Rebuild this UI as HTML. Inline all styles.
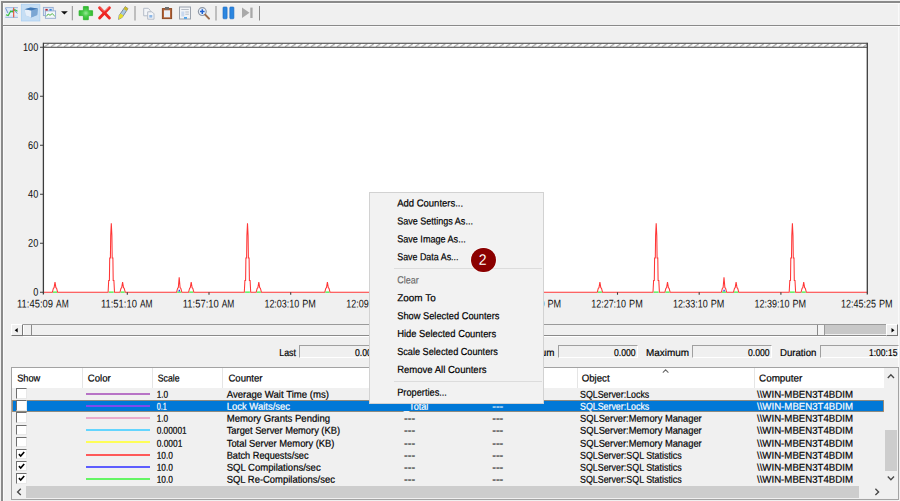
<!DOCTYPE html>
<html lang="en"><head><meta charset="utf-8"><title>Performance Monitor</title>
<style>
html,body{margin:0;padding:0}
body{width:900px;height:501px;overflow:hidden;position:relative;background:#f0f0f0;font-family:"Liberation Sans",sans-serif;color:#000;-webkit-text-stroke:0.2px}
.abs,.abs>*{position:absolute}
#frame div{position:absolute}
#toolbar{position:absolute;left:3px;top:4px;width:895px;height:21px}
#toolbar svg{position:absolute}
#chart{position:absolute;left:0;top:27px;width:900px;height:290px}
#slider{position:absolute;left:11px;top:324px;width:888px;height:12px}
#slider div,#slider svg{position:absolute}
#stats{position:absolute;left:0;top:340px;width:900px;height:24px}
.box{position:absolute;top:345px;height:12px;border-top:1px solid #a0a0a0;border-left:1px solid #a0a0a0;border-bottom:1px solid #fff;border-right:1px solid #fff;box-sizing:border-box;height:13px}
#list{position:absolute;left:11px;top:367px;width:888px;height:133px;box-sizing:border-box;border:1px solid #a3a3a3;background:#f0f0f0}
#hdr{position:absolute;left:0;top:0;width:872px;height:20px;background:#fff}
#hdr i{position:absolute;top:0;width:1px;height:20px;background:#e5e5e5}
.row{position:absolute;left:0;width:872px;height:12.15px}
.sel{background:#0078d7;box-shadow:inset 0 0 0 0.8px rgba(235,150,70,.8)}
.cb{position:absolute;left:3.8px;width:11px;height:10.5px;box-sizing:border-box;background:#fff;border-top:1px solid #6e6e6e;border-left:1px solid #6e6e6e;border-right:1px solid #e8e8e8;border-bottom:1px solid #e8e8e8}
.cl{position:absolute;left:73.7px;width:64.3px;height:2px;opacity:.92}
#menu{position:absolute;left:369px;top:192px;width:175px;height:212px;box-sizing:border-box;background:#f2f2f2;border:1px solid #d2d2d2}
#menu hr{position:absolute;margin:0;border:0;height:1px;background:#dcdcdc;left:24px;width:148px}
#badge{position:absolute;left:471.2px;top:247.7px;width:24.4px;height:24.4px;border-radius:50%;background:#8b0000;-webkit-text-stroke:0;box-shadow:0 0 0 .8px rgba(255,255,255,.7)}
</style></head><body>

<div id="frame">
<div style="left:1px;top:1px;width:899px;height:2px;background:#8a8a8a"></div>
<div style="left:1px;top:1px;width:2px;height:500px;background:#8a8a8a"></div>
<div style="left:3px;top:3px;width:897px;height:1px;background:#fafafa"></div>
<div style="left:3px;top:3px;width:1px;height:498px;background:#fafafa"></div>
<div style="left:898px;top:3px;width:1px;height:498px;background:#fafafa"></div>
<div style="left:3px;top:25px;width:897px;height:1px;background:#8a8a8a"></div>
<div style="left:4px;top:26px;width:896px;height:1px;background:#fafafa"></div>
</div>
<svg id="tb" style="position:absolute;left:0;top:0" width="280" height="26" viewBox="0 0 280 26">
<g><rect x="5.3" y="7.2" width="12.6" height="10.4" fill="#dce9f7"/><path d="M5.3 7.6 H17.9 M5.3 17.4 H17.9" stroke="#8fb0dc" stroke-width=".8"/><path d="M5.6 8.2 L8.2 13.5 M11 12.5 L13 9.5 M14.5 10 L17.5 14" fill="none" stroke="#6f93cf" stroke-width="1"/><path d="M5.6 14 H17.6" stroke="#f4f8fc" stroke-width="1"/><path d="M6 14.8 L8.2 15.6 L10.8 11 L12.4 11.8 L14.8 9.6 L17.4 11.2" fill="none" stroke="#35bd35" stroke-width="1.15"/><rect x="13.1" y="7.6" width="1.15" height="9.8" fill="#e4553a"/></g>
<g><rect x="21.3" y="4.2" width="18.6" height="16.8" fill="#c6def4" stroke="#a6cef2" stroke-width=".7"/><path d="M24.6 9.2 L30.5 7.6 L37.9 8.6 L37.2 15 L31.2 17.4 L25.6 15.4 Z" fill="#8fb5dd"/><path d="M24.6 9.2 L31.4 10.4 L31.2 17.4 L25.6 15.4 Z" fill="#e6eff9"/><path d="M31.4 10.4 L37.9 8.6 L37.2 15 L31.2 17.4 Z" fill="#7ba6d3"/><path d="M24.6 9.2 L30.5 7.6 L37.9 8.6 L31.4 10.4 Z" fill="#3f78b6"/></g>
<g><rect x="43.4" y="7.4" width="9.8" height="8.2" fill="#dde7f4" stroke="#92aad0" stroke-width=".9"/><rect x="45.4" y="10.9" width="10.2" height="7.4" fill="#f3f7fb" stroke="#92aad0" stroke-width=".9"/><rect x="45.4" y="8.9" width="2.3" height="1.7" fill="#b8202a"/><rect x="49.4" y="8.9" width="2.3" height="1.7" fill="#3c86dc"/><path d="M46.3 16.4 L48.2 14 L50 15.3 L52.2 13.6 L54.8 16.2" fill="none" stroke="#55b545" stroke-width="1"/></g>
<path d="M61 11.2 L67.8 11.2 L64.4 14.6 Z" fill="#111"/>
<rect x="71.8" y="6" width="1" height="14.3" fill="#909090"/>
<defs><radialGradient id="pg" cx="50%" cy="50%" r="50%"><stop offset="0" stop-color="#9be89b"/><stop offset=".45" stop-color="#4fcf4f"/><stop offset="1" stop-color="#2fb92f"/></radialGradient></defs>
<path d="M83.4 6.6 h4.9 v4.1 h4.3 v4.9 h-4.3 v4.1 h-4.9 v-4.1 h-4.3 v-4.9 h4.3 z" fill="url(#pg)" stroke="#2db52d" stroke-width=".8" stroke-linejoin="round"/>
<path d="M99.6 7.8 L109.4 17.9 M109.4 7.8 L99.6 17.9" stroke="#ee2622" stroke-width="2.9" stroke-linecap="round"/><path d="M100.2 7.6 L104 11.4 M108.6 7.6 L105.6 10.6" stroke="#f98a86" stroke-width=".9" stroke-linecap="round"/>
<g><path d="M125.2 6.6 L128 8.6 L122.2 17.4 L118.6 19.4 L119.2 15.4 Z" fill="#a9c8e2" stroke="#5a6878" stroke-width=".7"/><path d="M125.2 6.6 L128 8.6 L126.5 10.9 L123.7 8.9 Z" fill="#cdbb28"/><path d="M120.6 13.4 L123.4 15.4 L122.2 17.4 L118.6 19.4 L119.2 15.4 Z" fill="#e6de2a"/></g>
<rect x="134.5" y="6" width="1" height="14.5" fill="#8c8c8c"/>
<g fill="#f3f5f8" stroke="#b4bcc8" stroke-width="1"><path d="M143.7 8.3 h4.5 l2 2 v5.5 h-6.5 z"/><path d="M147.7 11.8 h4.3 l2 2 v5.4 h-6.3 z"/></g><rect x="149.3" y="15" width="3" height="2.6" fill="#8db7e6"/>
<g><rect x="162.4" y="8.6" width="9.2" height="10" fill="#b5653a" stroke="#8d4a25" stroke-width="1"/><rect x="164" y="10.3" width="6" height="7" fill="#eaf0f8"/><rect x="165" y="7" width="4" height="2.6" fill="#6e6e6e"/></g>
<g><rect x="179.5" y="7" width="11" height="12" fill="#f1f3f6" stroke="#9aa2ad"/><rect x="181.3" y="9" width="7.5" height="1" fill="#b8bec8"/><rect x="181.3" y="11.5" width="3" height="5" fill="#c8d8ee"/><rect x="185.3" y="11.5" width="3.6" height="1" fill="#b8bec8"/><rect x="185.3" y="13.7" width="3.6" height="1" fill="#b8bec8"/><rect x="184" y="17" width="3" height="1.8" fill="#4aa0e8"/></g>
<g><circle cx="202.3" cy="11.6" r="3.9" fill="#e9f2fc" stroke="#8f98a6" stroke-width="1.2"/><path d="M205.2 14.6 L209 18.6" stroke="#9b6b4a" stroke-width="2" stroke-linecap="round"/><path d="M200 11.6 h4.6 M202.3 9.3 v4.6" stroke="#1f5fd0" stroke-width="1.5"/></g>
<rect x="215.5" y="6" width="1" height="14.5" fill="#8c8c8c"/>
<rect x="223" y="7" width="4.1" height="11.8" rx=".8" fill="#2b86e0" stroke="#1767c0" stroke-width=".6"/><rect x="229.8" y="7" width="4.1" height="11.8" rx=".8" fill="#2b86e0" stroke="#1767c0" stroke-width=".6"/>
<path d="M242 7.6 L249.5 12.8 L242 18 Z" fill="#a9a9a9"/><rect x="250.3" y="7.6" width="2.3" height="10.4" fill="#a9a9a9"/>
<rect x="259" y="6" width="1" height="14.5" fill="#8c8c8c"/>
</svg>
<svg id="chartsvg" style="position:absolute;left:0;top:27px" width="900" height="290" viewBox="0 27 900 290" font-family="Liberation Sans, sans-serif">
<defs><pattern id="hatch" width="6.5" height="4" patternUnits="userSpaceOnUse" x="43.4" y="43.3"><rect width="6.5" height="4" fill="#fff"/><path d="M0.9 3.7 L5.6 0.5" stroke="#6a6a6a" stroke-width="0.85"/></pattern></defs>
<rect x="43.4" y="43.3" width="823.9" height="248.89999999999998" fill="#fff"/>
<rect x="43.4" y="43.3" width="823.9" height="4" fill="url(#hatch)"/>
<path d="M43.4 292.2 L52.4 292.2 L53.4 288.2 L54.1 287.7 L55.0 282.2 L55.9 287.7 L56.6 288.2 L57.6 292.2 L108.1 292.2 L108.7 280.5 L109.4 280.5 L109.7 258.0 L110.4 258.0 L110.7 235.5 L111.3 223.2 L111.9 235.5 L112.2 258.0 L112.9 258.0 L113.2 280.5 L113.9 280.5 L114.5 292.2 L120.0 292.2 L121.0 288.2 L121.7 287.7 L122.6 282.2 L123.5 287.7 L124.2 288.2 L125.2 292.2 L176.6 292.2 L177.6 288.2 L178.3 287.7 L179.2 277.2 L180.1 287.7 L180.8 288.2 L181.8 292.2 L188.6 292.2 L189.6 288.2 L190.3 287.7 L191.2 282.2 L192.1 287.7 L192.8 288.2 L193.8 292.2 L244.3 292.2 L244.9 280.5 L245.6 280.5 L245.9 258.0 L246.6 258.0 L246.9 235.5 L247.5 223.2 L248.1 235.5 L248.4 258.0 L249.1 258.0 L249.4 280.5 L250.1 280.5 L250.7 292.2 L256.2 292.2 L257.2 288.2 L257.9 287.7 L258.8 282.2 L259.7 287.7 L260.4 288.2 L261.4 292.2 L324.8 292.2 L325.8 288.2 L326.5 287.7 L327.4 282.2 L328.3 287.7 L329.0 288.2 L330.0 292.2 L380.5 292.2 L381.1 280.5 L381.8 280.5 L382.1 258.0 L382.8 258.0 L383.1 235.5 L383.7 223.2 L384.3 235.5 L384.6 258.0 L385.3 258.0 L385.6 280.5 L386.3 280.5 L386.9 292.2 L392.4 292.2 L393.4 288.2 L394.1 287.7 L395.0 282.2 L395.9 287.7 L396.6 288.2 L397.6 292.2 L449.0 292.2 L450.0 288.2 L450.7 287.7 L451.6 277.2 L452.5 287.7 L453.2 288.2 L454.2 292.2 L461.1 292.2 L462.1 288.2 L462.8 287.7 L463.7 282.2 L464.6 287.7 L465.3 288.2 L466.3 292.2 L516.8 292.2 L517.4 280.5 L518.1 280.5 L518.4 258.0 L519.1 258.0 L519.4 235.5 L520.0 223.2 L520.6 235.5 L520.9 258.0 L521.6 258.0 L521.9 280.5 L522.6 280.5 L523.2 292.2 L528.7 292.2 L529.7 288.2 L530.4 287.7 L531.3 282.2 L532.2 287.7 L532.9 288.2 L533.9 292.2 L597.3 292.2 L598.3 288.2 L599.0 287.7 L599.9 282.2 L600.8 287.7 L601.5 288.2 L602.5 292.2 L653.0 292.2 L653.6 280.5 L654.3 280.5 L654.6 258.0 L655.3 258.0 L655.6 235.5 L656.2 223.2 L656.8 235.5 L657.1 258.0 L657.8 258.0 L658.1 280.5 L658.8 280.5 L659.4 292.2 L664.9 292.2 L665.9 288.2 L666.6 287.7 L667.5 282.2 L668.4 287.7 L669.1 288.2 L670.1 292.2 L721.4 292.2 L722.4 288.2 L723.1 287.7 L724.0 277.2 L724.9 287.7 L725.6 288.2 L726.6 292.2 L733.5 292.2 L734.5 288.2 L735.2 287.7 L736.1 282.2 L737.0 287.7 L737.7 288.2 L738.7 292.2 L789.2 292.2 L789.8 280.5 L790.5 280.5 L790.8 258.0 L791.5 258.0 L791.8 235.5 L792.4 223.2 L793.0 235.5 L793.3 258.0 L794.0 258.0 L794.3 280.5 L795.0 280.5 L795.6 292.2 L801.1 292.2 L802.1 288.2 L802.8 287.7 L803.7 282.2 L804.6 287.7 L805.3 288.2 L806.3 292.2 L867.3 292.2" fill="none" stroke="#ff3636" stroke-width="1.05" stroke-linejoin="miter"/>
<path d="M53.0 292.2 H57.0 M108.9 292.2 H113.7 M120.6 292.2 H124.6 M177.2 292.2 H181.2 M189.2 292.2 H193.2 M245.1 292.2 H249.9 M256.8 292.2 H260.8 M325.4 292.2 H329.4 M381.3 292.2 H386.1 M393.0 292.2 H397.0 M449.6 292.2 H453.6 M461.7 292.2 H465.7 M517.6 292.2 H522.4 M529.3 292.2 H533.3 M597.9 292.2 H601.9 M653.8 292.2 H658.6 M665.5 292.2 H669.5 M722.0 292.2 H726.0 M734.1 292.2 H738.1 M790.0 292.2 H794.8 M801.7 292.2 H805.7" stroke="#40f040" stroke-width="1.3" fill="none"/>
<path d="M178.6 290.6 h1.4 M723.4 290.6 h1.4" stroke="#3030ff" stroke-width="1.6"/>
<path d="M43.4 43.3 H867.3 M43.4 47.3 H867.3" stroke="#3c3c3c" stroke-width="1.1" fill="none"/>
<path d="M43.4 42.8 V294.5 M867.3 42.8 V294.5" stroke="#3c3c3c" stroke-width="1.3" fill="none"/>
<path d="M40 47.3 H43.4 M40 96.3 H43.4 M40 145.3 H43.4 M40 194.2 H43.4 M40 243.2 H43.4 M40 292.2 H43.4" stroke="#3c3c3c" stroke-width="1.1"/>
<path d="M127.3 292.2 V294.8 M209.0 292.2 V294.8 M290.7 292.2 V294.8 M372.4 292.2 V294.8 M454.1 292.2 V294.8 M535.8 292.2 V294.8 M617.5 292.2 V294.8 M699.2 292.2 V294.8 M780.9 292.2 V294.8" stroke="#3c3c3c" stroke-width="1.1"/>
<text x="23.0" y="50.9" font-size="11.2" textLength="15.3" lengthAdjust="spacingAndGlyphs" fill="#111" transform="rotate(0.05 23.0 50.9)">100</text>
<text x="28.1" y="99.9" font-size="11.2" textLength="10.2" lengthAdjust="spacingAndGlyphs" fill="#111" transform="rotate(0.05 28.1 99.9)">80</text>
<text x="28.1" y="148.9" font-size="11.2" textLength="10.2" lengthAdjust="spacingAndGlyphs" fill="#111" transform="rotate(0.05 28.1 148.9)">60</text>
<text x="28.1" y="197.8" font-size="11.2" textLength="10.2" lengthAdjust="spacingAndGlyphs" fill="#111" transform="rotate(0.05 28.1 197.8)">40</text>
<text x="28.1" y="246.8" font-size="11.2" textLength="10.2" lengthAdjust="spacingAndGlyphs" fill="#111" transform="rotate(0.05 28.1 246.8)">20</text>
<text x="33.2" y="295.8" font-size="11.2" textLength="5.1" lengthAdjust="spacingAndGlyphs" fill="#111" transform="rotate(0.05 33.2 295.8)">0</text>
<text x="17.1" y="307.5" font-size="11.2" textLength="35.9" lengthAdjust="spacingAndGlyphs" fill="#111" transform="rotate(0.05 18.1 307.5)">11:45:09</text>
<text x="56.1" y="307.5" font-size="11.2" textLength="12.6" lengthAdjust="spacingAndGlyphs" fill="#111" transform="rotate(0.05 18.1 307.5)">AM</text>
<text x="101.0" y="307.5" font-size="11.2" textLength="35.9" lengthAdjust="spacingAndGlyphs" fill="#111" transform="rotate(0.05 102.0 307.5)">11:51:10</text>
<text x="140.0" y="307.5" font-size="11.2" textLength="12.6" lengthAdjust="spacingAndGlyphs" fill="#111" transform="rotate(0.05 102.0 307.5)">AM</text>
<text x="182.8" y="307.5" font-size="11.2" textLength="35.9" lengthAdjust="spacingAndGlyphs" fill="#111" transform="rotate(0.05 183.8 307.5)">11:57:10</text>
<text x="221.7" y="307.5" font-size="11.2" textLength="12.6" lengthAdjust="spacingAndGlyphs" fill="#111" transform="rotate(0.05 183.8 307.5)">AM</text>
<text x="264.4" y="307.5" font-size="11.2" textLength="34.9" lengthAdjust="spacingAndGlyphs" fill="#111" transform="rotate(0.05 265.4 307.5)">12:03:10</text>
<text x="302.3" y="307.5" font-size="11.2" textLength="13.6" lengthAdjust="spacingAndGlyphs" fill="#111" transform="rotate(0.05 265.4 307.5)">PM</text>
<text x="346.2" y="307.5" font-size="11.2" textLength="34.9" lengthAdjust="spacingAndGlyphs" fill="#111" transform="rotate(0.05 347.2 307.5)">12:09:10</text>
<text x="384.1" y="307.5" font-size="11.2" textLength="13.6" lengthAdjust="spacingAndGlyphs" fill="#111" transform="rotate(0.05 347.2 307.5)">PM</text>
<text x="427.9" y="307.5" font-size="11.2" textLength="34.9" lengthAdjust="spacingAndGlyphs" fill="#111" transform="rotate(0.05 428.9 307.5)">12:15:10</text>
<text x="465.8" y="307.5" font-size="11.2" textLength="13.6" lengthAdjust="spacingAndGlyphs" fill="#111" transform="rotate(0.05 428.9 307.5)">PM</text>
<text x="509.5" y="307.5" font-size="11.2" textLength="34.9" lengthAdjust="spacingAndGlyphs" fill="#111" transform="rotate(0.05 510.5 307.5)">12:21:10</text>
<text x="547.4" y="307.5" font-size="11.2" textLength="13.6" lengthAdjust="spacingAndGlyphs" fill="#111" transform="rotate(0.05 510.5 307.5)">PM</text>
<text x="591.2" y="307.5" font-size="11.2" textLength="34.9" lengthAdjust="spacingAndGlyphs" fill="#111" transform="rotate(0.05 592.2 307.5)">12:27:10</text>
<text x="629.1" y="307.5" font-size="11.2" textLength="13.6" lengthAdjust="spacingAndGlyphs" fill="#111" transform="rotate(0.05 592.2 307.5)">PM</text>
<text x="672.9" y="307.5" font-size="11.2" textLength="34.9" lengthAdjust="spacingAndGlyphs" fill="#111" transform="rotate(0.05 673.9 307.5)">12:33:10</text>
<text x="710.8" y="307.5" font-size="11.2" textLength="13.6" lengthAdjust="spacingAndGlyphs" fill="#111" transform="rotate(0.05 673.9 307.5)">PM</text>
<text x="754.6" y="307.5" font-size="11.2" textLength="34.9" lengthAdjust="spacingAndGlyphs" fill="#111" transform="rotate(0.05 755.6 307.5)">12:39:10</text>
<text x="792.5" y="307.5" font-size="11.2" textLength="13.6" lengthAdjust="spacingAndGlyphs" fill="#111" transform="rotate(0.05 755.6 307.5)">PM</text>
<text x="841.0" y="307.5" font-size="11.2" textLength="34.9" lengthAdjust="spacingAndGlyphs" fill="#111" transform="rotate(0.05 842.0 307.5)">12:45:25</text>
<text x="878.9" y="307.5" font-size="11.2" textLength="13.6" lengthAdjust="spacingAndGlyphs" fill="#111" transform="rotate(0.05 842.0 307.5)">PM</text>
</svg>
<div id="slider">
<div style="left:12px;top:0;width:863px;height:1px;background:#9a9a9a"></div>
<div style="left:12px;top:10.5px;width:863px;height:1px;background:#8a8a8a"></div>
<div style="left:12px;top:11.5px;width:863px;height:1px;background:#fff"></div>
<div style="left:0;top:0;width:11.5px;height:11.5px;box-sizing:border-box;background:#f0f0f0;border-top:1px solid #fff;border-left:1px solid #fff;border-right:1px solid #777;border-bottom:1px solid #777"></div>
<svg style="left:0;top:0" width="12" height="12"><path d="M6.7 3.9 L6.7 8.5 L3.7 6.2 Z" fill="#000"/></svg>
<div style="left:12px;top:1px;width:7.2px;height:9.5px;background:#f0f0f0;border-right:1px solid #8a8a8a;border-left:1px solid #fff"></div>
<div style="left:806px;top:1px;width:7.5px;height:9.5px;background:#f4f4f4;border-left:1px solid #8a8a8a;border-right:1px solid #9a9a9a;box-sizing:border-box"></div>
<div style="left:813.5px;top:1.2px;width:61.5px;height:9.3px;background:#c8c8c8"></div>
<div style="left:875px;top:0;width:12.3px;height:11.5px;box-sizing:border-box;background:#f0f0f0;border-top:1px solid #fff;border-left:1px solid #fff;border-right:1px solid #777;border-bottom:1px solid #777"></div>
<svg style="left:875px;top:0" width="12" height="12"><path d="M5.5 3.9 L5.5 8.5 L8.5 6.2 Z" fill="#000"/></svg>
</div>
<div id="statsrow">
<span style="position:absolute;left:279px;top:347px;font-size:10.0px;line-height:1;color:#000;white-space:nowrap;transform-origin:0 0;transform:translate(0.30px,0.94px) rotate(0.05deg) scaleX(0.8835)">Last</span>
<div class="box" style="left:299px;width:79px"></div>
<span style="position:absolute;left:355px;top:347px;font-size:10.0px;line-height:1;color:#000;white-space:nowrap;transform-origin:0 0;transform:translate(0.00px,0.94px) rotate(0.05deg) scaleX(0.8632)">0.000</span>
<span style="position:absolute;left:386px;top:347px;font-size:10.0px;line-height:1;color:#000;white-space:nowrap;transform-origin:0 0;transform:translate(0.00px,0.94px) rotate(0.05deg) scaleX(1.0252)">Average</span>
<div class="box" style="left:428px;width:79px"></div>
<span style="position:absolute;left:484px;top:347px;font-size:10.0px;line-height:1;color:#000;white-space:nowrap;transform-origin:0 0;transform:translate(0.00px,0.94px) rotate(0.05deg) scaleX(0.8632)">0.000</span>
<span style="position:absolute;left:514px;top:347px;font-size:10.0px;line-height:1;color:#000;white-space:nowrap;transform-origin:0 0;transform:translate(0.50px,0.94px) rotate(0.05deg) scaleX(0.9838)">Minimum</span>
<div class="box" style="left:558px;width:79.5px"></div>
<span style="position:absolute;left:614px;top:347px;font-size:10.0px;line-height:1;color:#000;white-space:nowrap;transform-origin:0 0;transform:translate(0.00px,0.94px) rotate(0.05deg) scaleX(0.8632)">0.000</span>
<span style="position:absolute;left:646px;top:347px;font-size:10.0px;line-height:1;color:#000;white-space:nowrap;transform-origin:0 0;transform:translate(0.00px,0.94px) rotate(0.05deg) scaleX(0.9923)">Maximum</span>
<div class="box" style="left:692px;width:79.5px"></div>
<span style="position:absolute;left:748px;top:347px;font-size:10.0px;line-height:1;color:#000;white-space:nowrap;transform-origin:0 0;transform:translate(0.00px,0.94px) rotate(0.05deg) scaleX(0.8632)">0.000</span>
<span style="position:absolute;left:780px;top:347px;font-size:10.0px;line-height:1;color:#000;white-space:nowrap;transform-origin:0 0;transform:translate(0.00px,0.94px) rotate(0.05deg) scaleX(0.9630)">Duration</span>
<div class="box" style="left:820px;width:78.5px"></div>
<span style="position:absolute;left:869px;top:347px;font-size:10.0px;line-height:1;color:#000;white-space:nowrap;transform-origin:0 0;transform:translate(0.00px,0.94px) rotate(0.05deg) scaleX(0.8512)">1:00:15</span>
</div>
<div id="list">
<div id="hdr">
<i style="left:70px"></i>
<i style="left:140px"></i>
<i style="left:210px"></i>
<i style="left:386px"></i>
<i style="left:474px"></i>
<i style="left:565px"></i>
<i style="left:742px"></i>
<span style="position:absolute;left:5px;top:5px;font-size:10.0px;line-height:1;color:#000;white-space:nowrap;transform-origin:0 0;transform:translate(0.20px,0.54px) rotate(0.05deg) scaleX(0.9235)">Show</span>
<span style="position:absolute;left:75px;top:5px;font-size:10.0px;line-height:1;color:#000;white-space:nowrap;transform-origin:0 0;transform:translate(0.80px,0.54px) rotate(0.05deg) scaleX(0.9583)">Color</span>
<span style="position:absolute;left:145px;top:5px;font-size:10.0px;line-height:1;color:#000;white-space:nowrap;transform-origin:0 0;transform:translate(0.80px,0.54px) rotate(0.05deg) scaleX(0.8715)">Scale</span>
<span style="position:absolute;left:216px;top:5px;font-size:10.0px;line-height:1;color:#000;white-space:nowrap;transform-origin:0 0;transform:translate(0.40px,0.54px) rotate(0.05deg) scaleX(0.9585)">Counter</span>
<span style="position:absolute;left:392px;top:5px;font-size:10.0px;line-height:1;color:#000;white-space:nowrap;transform-origin:0 0;transform:translate(0.00px,0.54px) rotate(0.05deg) scaleX(0.9523)">Instance</span>
<span style="position:absolute;left:480px;top:5px;font-size:10.0px;line-height:1;color:#000;white-space:nowrap;transform-origin:0 0;transform:translate(0.00px,0.54px) rotate(0.05deg) scaleX(0.9503)">Parent</span>
<span style="position:absolute;left:569px;top:5px;font-size:10.0px;line-height:1;color:#000;white-space:nowrap;transform-origin:0 0;transform:translate(0.80px,0.54px) rotate(0.05deg) scaleX(0.9619)">Object</span>
<span style="position:absolute;left:747px;top:5px;font-size:10.0px;line-height:1;color:#000;white-space:nowrap;transform-origin:0 0;transform:translate(0.00px,0.54px) rotate(0.05deg) scaleX(0.9885)">Computer</span>
<svg style="position:absolute;left:650px;top:0" width="8" height="6"><path d="M0.8 4.6 L3.6 1.8 L6.4 4.6" fill="none" stroke="#686868" stroke-width="1.05"/></svg>
</div>
<div class="row" style="top:20.00px">
<div class="cb" style="top:0.1px">
</div>
<div class="cl" style="top:5.00px;background:#b268c2"></div>
<span style="position:absolute;left:144px;top:1px;font-size:10.0px;line-height:1;color:#000;white-space:nowrap;transform-origin:0 0;transform:translate(0.70px,0.64px) rotate(0.05deg) scaleX(0.8273)">1.0</span>
<span style="position:absolute;left:214px;top:1px;font-size:10.0px;line-height:1;color:#000;white-space:nowrap;transform-origin:0 0;transform:translate(0.70px,0.64px) rotate(0.05deg) scaleX(0.9579)">Average Wait Time (ms)</span>
<span style="position:absolute;left:392px;top:1px;font-size:10.0px;line-height:1;color:#000;white-space:nowrap;transform-origin:0 0;transform:translate(0.00px,0.64px) rotate(0.05deg) scaleX(0.9144)">_Total</span>
<span style="position:absolute;left:480px;top:1px;font-size:10.0px;line-height:1;color:#000;white-space:nowrap;transform-origin:0 0;transform:translate(0.20px,0.64px) rotate(0.05deg) scaleX(1.1111)">---</span>
<span style="position:absolute;left:568px;top:1px;font-size:10.0px;line-height:1;color:#000;white-space:nowrap;transform-origin:0 0;transform:translate(0.00px,0.64px) rotate(0.05deg) scaleX(0.8843)">SQLServer:Locks</span>
<span style="position:absolute;left:745px;top:1px;font-size:10.0px;line-height:1;color:#000;white-space:nowrap;transform-origin:0 0;transform:translate(0.00px,0.64px) rotate(0.05deg) scaleX(0.9653)">\\WIN-MBEN3T4BDIM</span>
</div>
<div class="row sel" style="top:32.15px">
<div class="cb" style="top:0.1px">
</div>
<div class="cl" style="top:4.85px;background:#8a46ee"></div>
<span style="position:absolute;left:144px;top:1px;font-size:10.0px;line-height:1;color:#fff;white-space:nowrap;transform-origin:0 0;transform:translate(0.70px,0.64px) rotate(0.05deg) scaleX(0.7194)">0.1</span>
<span style="position:absolute;left:214px;top:1px;font-size:10.0px;line-height:1;color:#fff;white-space:nowrap;transform-origin:0 0;transform:translate(0.70px,0.64px) rotate(0.05deg) scaleX(0.9466)">Lock Waits/sec</span>
<span style="position:absolute;left:392px;top:1px;font-size:10.0px;line-height:1;color:#fff;white-space:nowrap;transform-origin:0 0;transform:translate(0.00px,0.64px) rotate(0.05deg) scaleX(0.9144)">_Total</span>
<span style="position:absolute;left:480px;top:1px;font-size:10.0px;line-height:1;color:#fff;white-space:nowrap;transform-origin:0 0;transform:translate(0.20px,0.64px) rotate(0.05deg) scaleX(1.1111)">---</span>
<span style="position:absolute;left:568px;top:1px;font-size:10.0px;line-height:1;color:#fff;white-space:nowrap;transform-origin:0 0;transform:translate(0.00px,0.64px) rotate(0.05deg) scaleX(0.8843)">SQLServer:Locks</span>
<span style="position:absolute;left:745px;top:1px;font-size:10.0px;line-height:1;color:#fff;white-space:nowrap;transform-origin:0 0;transform:translate(0.00px,0.64px) rotate(0.05deg) scaleX(0.9653)">\\WIN-MBEN3T4BDIM</span>
</div>
<div class="row" style="top:44.30px">
<div class="cb" style="top:0.1px">
</div>
<div class="cl" style="top:4.70px;background:#e8a6ca"></div>
<span style="position:absolute;left:144px;top:1px;font-size:10.0px;line-height:1;color:#000;white-space:nowrap;transform-origin:0 0;transform:translate(0.70px,0.64px) rotate(0.05deg) scaleX(0.8273)">1.0</span>
<span style="position:absolute;left:214px;top:1px;font-size:10.0px;line-height:1;color:#000;white-space:nowrap;transform-origin:0 0;transform:translate(0.70px,0.64px) rotate(0.05deg) scaleX(0.9531)">Memory Grants Pending</span>
<span style="position:absolute;left:392px;top:1px;font-size:10.0px;line-height:1;color:#000;white-space:nowrap;transform-origin:0 0;transform:translate(0.00px,0.64px) rotate(0.05deg) scaleX(1.1111)">---</span>
<span style="position:absolute;left:480px;top:1px;font-size:10.0px;line-height:1;color:#000;white-space:nowrap;transform-origin:0 0;transform:translate(0.20px,0.64px) rotate(0.05deg) scaleX(1.1111)">---</span>
<span style="position:absolute;left:568px;top:1px;font-size:10.0px;line-height:1;color:#000;white-space:nowrap;transform-origin:0 0;transform:translate(0.00px,0.64px) rotate(0.05deg) scaleX(0.9318)">SQLServer:Memory Manager</span>
<span style="position:absolute;left:745px;top:1px;font-size:10.0px;line-height:1;color:#000;white-space:nowrap;transform-origin:0 0;transform:translate(0.00px,0.64px) rotate(0.05deg) scaleX(0.9653)">\\WIN-MBEN3T4BDIM</span>
</div>
<div class="row" style="top:56.45px">
<div class="cb" style="top:0.1px">
</div>
<div class="cl" style="top:5.05px;background:#58d2ff"></div>
<span style="position:absolute;left:144px;top:1px;font-size:10.0px;line-height:1;color:#000;white-space:nowrap;transform-origin:0 0;transform:translate(0.70px,0.64px) rotate(0.05deg) scaleX(0.8299)">0.00001</span>
<span style="position:absolute;left:214px;top:1px;font-size:10.0px;line-height:1;color:#000;white-space:nowrap;transform-origin:0 0;transform:translate(0.70px,0.64px) rotate(0.05deg) scaleX(0.9310)">Target Server Memory (KB)</span>
<span style="position:absolute;left:392px;top:1px;font-size:10.0px;line-height:1;color:#000;white-space:nowrap;transform-origin:0 0;transform:translate(0.00px,0.64px) rotate(0.05deg) scaleX(1.1111)">---</span>
<span style="position:absolute;left:480px;top:1px;font-size:10.0px;line-height:1;color:#000;white-space:nowrap;transform-origin:0 0;transform:translate(0.20px,0.64px) rotate(0.05deg) scaleX(1.1111)">---</span>
<span style="position:absolute;left:568px;top:1px;font-size:10.0px;line-height:1;color:#000;white-space:nowrap;transform-origin:0 0;transform:translate(0.00px,0.64px) rotate(0.05deg) scaleX(0.9318)">SQLServer:Memory Manager</span>
<span style="position:absolute;left:745px;top:1px;font-size:10.0px;line-height:1;color:#000;white-space:nowrap;transform-origin:0 0;transform:translate(0.00px,0.64px) rotate(0.05deg) scaleX(0.9653)">\\WIN-MBEN3T4BDIM</span>
</div>
<div class="row" style="top:68.60px">
<div class="cb" style="top:0.1px">
</div>
<div class="cl" style="top:4.90px;background:#ffff4a"></div>
<span style="position:absolute;left:144px;top:1px;font-size:10.0px;line-height:1;color:#000;white-space:nowrap;transform-origin:0 0;transform:translate(0.70px,0.64px) rotate(0.05deg) scaleX(0.8370)">0.0001</span>
<span style="position:absolute;left:214px;top:1px;font-size:10.0px;line-height:1;color:#000;white-space:nowrap;transform-origin:0 0;transform:translate(0.70px,0.64px) rotate(0.05deg) scaleX(0.9372)">Total Server Memory (KB)</span>
<span style="position:absolute;left:392px;top:1px;font-size:10.0px;line-height:1;color:#000;white-space:nowrap;transform-origin:0 0;transform:translate(0.00px,0.64px) rotate(0.05deg) scaleX(1.1111)">---</span>
<span style="position:absolute;left:480px;top:1px;font-size:10.0px;line-height:1;color:#000;white-space:nowrap;transform-origin:0 0;transform:translate(0.20px,0.64px) rotate(0.05deg) scaleX(1.1111)">---</span>
<span style="position:absolute;left:568px;top:1px;font-size:10.0px;line-height:1;color:#000;white-space:nowrap;transform-origin:0 0;transform:translate(0.00px,0.64px) rotate(0.05deg) scaleX(0.9318)">SQLServer:Memory Manager</span>
<span style="position:absolute;left:745px;top:1px;font-size:10.0px;line-height:1;color:#000;white-space:nowrap;transform-origin:0 0;transform:translate(0.00px,0.64px) rotate(0.05deg) scaleX(0.9653)">\\WIN-MBEN3T4BDIM</span>
</div>
<div class="row" style="top:80.75px">
<div class="cb" style="top:0.1px">
<svg style="position:absolute;left:0;top:0" width="9" height="9" viewBox="0 0 9 9"><path d="M1.9 4.1 L3.7 6 L7.2 2" fill="none" stroke="#000" stroke-width="1.6"/></svg>
</div>
<div class="cl" style="top:5.25px;background:#ff4c4c"></div>
<span style="position:absolute;left:144px;top:1px;font-size:10.0px;line-height:1;color:#000;white-space:nowrap;transform-origin:0 0;transform:translate(0.70px,0.64px) rotate(0.05deg) scaleX(0.8323)">10.0</span>
<span style="position:absolute;left:214px;top:1px;font-size:10.0px;line-height:1;color:#000;white-space:nowrap;transform-origin:0 0;transform:translate(0.70px,0.64px) rotate(0.05deg) scaleX(0.9198)">Batch Requests/sec</span>
<span style="position:absolute;left:392px;top:1px;font-size:10.0px;line-height:1;color:#000;white-space:nowrap;transform-origin:0 0;transform:translate(0.00px,0.64px) rotate(0.05deg) scaleX(1.1111)">---</span>
<span style="position:absolute;left:480px;top:1px;font-size:10.0px;line-height:1;color:#000;white-space:nowrap;transform-origin:0 0;transform:translate(0.20px,0.64px) rotate(0.05deg) scaleX(1.1111)">---</span>
<span style="position:absolute;left:568px;top:1px;font-size:10.0px;line-height:1;color:#000;white-space:nowrap;transform-origin:0 0;transform:translate(0.00px,0.64px) rotate(0.05deg) scaleX(0.8869)">SQLServer:SQL Statistics</span>
<span style="position:absolute;left:745px;top:1px;font-size:10.0px;line-height:1;color:#000;white-space:nowrap;transform-origin:0 0;transform:translate(0.00px,0.64px) rotate(0.05deg) scaleX(0.9653)">\\WIN-MBEN3T4BDIM</span>
</div>
<div class="row" style="top:92.90px">
<div class="cb" style="top:0.1px">
<svg style="position:absolute;left:0;top:0" width="9" height="9" viewBox="0 0 9 9"><path d="M1.9 4.1 L3.7 6 L7.2 2" fill="none" stroke="#000" stroke-width="1.6"/></svg>
</div>
<div class="cl" style="top:5.10px;background:#5050ff"></div>
<span style="position:absolute;left:144px;top:1px;font-size:10.0px;line-height:1;color:#000;white-space:nowrap;transform-origin:0 0;transform:translate(0.70px,0.64px) rotate(0.05deg) scaleX(0.8323)">10.0</span>
<span style="position:absolute;left:214px;top:1px;font-size:10.0px;line-height:1;color:#000;white-space:nowrap;transform-origin:0 0;transform:translate(0.70px,0.64px) rotate(0.05deg) scaleX(0.9537)">SQL Compilations/sec</span>
<span style="position:absolute;left:392px;top:1px;font-size:10.0px;line-height:1;color:#000;white-space:nowrap;transform-origin:0 0;transform:translate(0.00px,0.64px) rotate(0.05deg) scaleX(1.1111)">---</span>
<span style="position:absolute;left:480px;top:1px;font-size:10.0px;line-height:1;color:#000;white-space:nowrap;transform-origin:0 0;transform:translate(0.20px,0.64px) rotate(0.05deg) scaleX(1.1111)">---</span>
<span style="position:absolute;left:568px;top:1px;font-size:10.0px;line-height:1;color:#000;white-space:nowrap;transform-origin:0 0;transform:translate(0.00px,0.64px) rotate(0.05deg) scaleX(0.8869)">SQLServer:SQL Statistics</span>
<span style="position:absolute;left:745px;top:1px;font-size:10.0px;line-height:1;color:#000;white-space:nowrap;transform-origin:0 0;transform:translate(0.00px,0.64px) rotate(0.05deg) scaleX(0.9653)">\\WIN-MBEN3T4BDIM</span>
</div>
<div class="row" style="top:105.05px">
<div class="cb" style="top:0.1px">
<svg style="position:absolute;left:0;top:0" width="9" height="9" viewBox="0 0 9 9"><path d="M1.9 4.1 L3.7 6 L7.2 2" fill="none" stroke="#000" stroke-width="1.6"/></svg>
</div>
<div class="cl" style="top:4.95px;background:#58f558"></div>
<span style="position:absolute;left:144px;top:1px;font-size:10.0px;line-height:1;color:#000;white-space:nowrap;transform-origin:0 0;transform:translate(0.70px,0.64px) rotate(0.05deg) scaleX(0.8323)">10.0</span>
<span style="position:absolute;left:214px;top:1px;font-size:10.0px;line-height:1;color:#000;white-space:nowrap;transform-origin:0 0;transform:translate(0.70px,0.64px) rotate(0.05deg) scaleX(0.9435)">SQL Re-Compilations/sec</span>
<span style="position:absolute;left:392px;top:1px;font-size:10.0px;line-height:1;color:#000;white-space:nowrap;transform-origin:0 0;transform:translate(0.00px,0.64px) rotate(0.05deg) scaleX(1.1111)">---</span>
<span style="position:absolute;left:480px;top:1px;font-size:10.0px;line-height:1;color:#000;white-space:nowrap;transform-origin:0 0;transform:translate(0.20px,0.64px) rotate(0.05deg) scaleX(1.1111)">---</span>
<span style="position:absolute;left:568px;top:1px;font-size:10.0px;line-height:1;color:#000;white-space:nowrap;transform-origin:0 0;transform:translate(0.00px,0.64px) rotate(0.05deg) scaleX(0.8869)">SQLServer:SQL Statistics</span>
<span style="position:absolute;left:745px;top:1px;font-size:10.0px;line-height:1;color:#000;white-space:nowrap;transform-origin:0 0;transform:translate(0.00px,0.64px) rotate(0.05deg) scaleX(0.9653)">\\WIN-MBEN3T4BDIM</span>
</div>
<div style="position:absolute;left:873px;top:61.5px;width:11.7px;height:41.5px;background:#cdcdcd"></div>
<svg style="position:absolute;left:874px;top:4px" width="10" height="8"><path d="M1.8 6 L4.9 2.8 L8 6" fill="none" stroke="#484848" stroke-width="1.35"/></svg>
<svg style="position:absolute;left:874px;top:105.5px" width="10" height="8"><path d="M1.8 2.5 L4.9 5.7 L8 2.5" fill="none" stroke="#484848" stroke-width="1.35"/></svg>
<div style="position:absolute;left:14px;top:118.19999999999999px;width:833.3px;height:11.4px;background:#cdcdcd"></div>
<svg style="position:absolute;left:3px;top:119px" width="8" height="10"><path d="M5.8 1.8 L2.6 4.9 L5.8 8" fill="none" stroke="#484848" stroke-width="1.35"/></svg>
<svg style="position:absolute;left:861px;top:119px" width="8" height="10"><path d="M2.4 1.8 L5.6 4.9 L2.4 8" fill="none" stroke="#484848" stroke-width="1.35"/></svg>
</div>
<div id="menu">
<span style="position:absolute;left:27px;top:5px;font-size:10.2px;line-height:1;color:#000;white-space:nowrap;transform-origin:0 0;transform:translate(0.20px,0.57px) rotate(0.05deg) scaleX(0.9313)">Add Counters...</span>
<span style="position:absolute;left:27px;top:23px;font-size:10.2px;line-height:1;color:#000;white-space:nowrap;transform-origin:0 0;transform:translate(0.20px,0.47px) rotate(0.05deg) scaleX(0.8854)">Save Settings As...</span>
<span style="position:absolute;left:27px;top:41px;font-size:10.2px;line-height:1;color:#000;white-space:nowrap;transform-origin:0 0;transform:translate(0.20px,0.37px) rotate(0.05deg) scaleX(0.8897)">Save Image As...</span>
<span style="position:absolute;left:27px;top:59px;font-size:10.2px;line-height:1;color:#000;white-space:nowrap;transform-origin:0 0;transform:translate(0.20px,0.27px) rotate(0.05deg) scaleX(0.8733)">Save Data As...</span>
<span style="position:absolute;left:27px;top:82px;font-size:10.2px;line-height:1;color:#6d6d6d;white-space:nowrap;transform-origin:0 0;transform:translate(0.20px,0.37px) rotate(0.05deg) scaleX(0.8821)">Clear</span>
<span style="position:absolute;left:27px;top:100px;font-size:10.2px;line-height:1;color:#000;white-space:nowrap;transform-origin:0 0;transform:translate(0.20px,0.27px) rotate(0.05deg) scaleX(0.9773)">Zoom To</span>
<span style="position:absolute;left:27px;top:118px;font-size:10.2px;line-height:1;color:#000;white-space:nowrap;transform-origin:0 0;transform:translate(0.20px,0.17px) rotate(0.05deg) scaleX(0.9112)">Show Selected Counters</span>
<span style="position:absolute;left:27px;top:136px;font-size:10.2px;line-height:1;color:#000;white-space:nowrap;transform-origin:0 0;transform:translate(0.20px,0.07px) rotate(0.05deg) scaleX(0.9199)">Hide Selected Counters</span>
<span style="position:absolute;left:27px;top:153px;font-size:10.2px;line-height:1;color:#000;white-space:nowrap;transform-origin:0 0;transform:translate(0.20px,0.97px) rotate(0.05deg) scaleX(0.8979)">Scale Selected Counters</span>
<span style="position:absolute;left:27px;top:171px;font-size:10.2px;line-height:1;color:#000;white-space:nowrap;transform-origin:0 0;transform:translate(0.20px,0.87px) rotate(0.05deg) scaleX(0.9341)">Remove All Counters</span>
<span style="position:absolute;left:27px;top:194px;font-size:10.2px;line-height:1;color:#000;white-space:nowrap;transform-origin:0 0;transform:translate(0.20px,0.77px) rotate(0.05deg) scaleX(0.9056)">Properties...</span>
<hr style="top:75px">
<hr style="top:188px">
</div>
<div id="badge"><span style="position:absolute;left:7px;top:3px;font-size:15px;line-height:1;color:#fff;white-space:nowrap;transform-origin:0 0;transform:translate(0.70px,0.70px) rotate(0.05deg) scaleX(0.9350)">2</span></div>
</body></html>
